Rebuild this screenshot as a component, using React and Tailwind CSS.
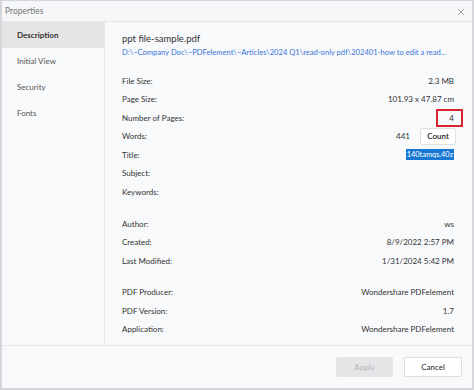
import React from 'react';

const rowsA = [
  ['File Size:', '2.3 MB'],
  ['Page Size:', '101.93 x 47.87 cm'],
  ['Number of Pages:', 'pages'],
  ['Words:', 'words'],
  ['Title:', 'title'],
  ['Subject:', ''],
  ['Keywords:', ''],
];

const rowsB = [
  ['Author:', 'ws'],
  ['Created:', '8/9/2022 2:57 PM'],
  ['Last Modified:', '1/31/2024 5:42 PM'],
];

const rowsC = [
  ['PDF Producer:', 'Wondershare PDFelement'],
  ['PDF Version:', '1.7'],
  ['Application:', 'Wondershare PDFelement'],
];

const Value = ({ v }) => {
  if (v === 'pages') {
    return (
      <span className="relative">
        4
        <span className="absolute -left-[13px] -right-[9px] -top-[3px] -bottom-[3px] border-2 border-[#d9262e]"></span>
      </span>
    );
  }
  if (v === 'words') {
    return (
      <span className="flex items-center">
        <span className="mr-[10px]">441</span>
        <span className="h-[17px] w-[36px] mr-[-2px] flex items-center justify-center bg-white border border-[#e0e1e4] rounded-[2px] font-semibold text-[#222]">Count</span>
      </span>
    );
  }
  if (v === 'title') {
    return <span className="bg-[#1777d4] text-white text-[7.4px] px-px leading-[11px]">140tamqs.40z</span>;
  }
  return <span>{v}</span>;
};

const Row = ({ label, value }) => (
  <div className="h-[18.5px] flex items-center justify-between">
    <span>{label}</span>
    <Value v={value} />
  </div>
);

export default function App() {
  return (
    <div className="w-[474px] h-[390px] bg-[#d5d7dc] pt-px pl-[2px] pr-[2px] pb-[2px] font-['Lato','Open_Sans',sans-serif]">
      <div className="h-full bg-[#f8f9fb] flex flex-col text-[8px] text-[#333]">
        <div className="h-[21px] shrink-0 flex items-center justify-between border-b border-[#e6e7ea] bg-[#f6f7f9]">
          <span className="pl-[3px] text-[8.5px] text-[#777]">Properties</span>
          <svg width="8" height="8" viewBox="0 0 8 8" className="mr-[7px] mt-[2px]">
            <path d="M1 1L7 7M7 1L1 7" stroke="#999" strokeWidth="0.9" />
          </svg>
        </div>
        <div className="flex flex-1 min-h-0">
          <div className="w-[103px] shrink-0 border-r border-[#e6e7ea] text-[8px] text-[#555]">
            <div className="h-[26px] bg-[#e5e5e6] flex items-center pl-[15px] font-bold text-[#333]">Description</div>
            <div className="h-[26px] flex items-center pl-[15px]">Initial View</div>
            <div className="h-[26px] flex items-center pl-[15px]">Security</div>
            <div className="h-[26px] flex items-center pl-[15px]">Fonts</div>
          </div>
          <div className="flex-1 min-w-0 overflow-hidden pl-[17px] pr-[18px] pt-[10px]">
            <div className="text-[9.5px] leading-[14px] text-[#333]">ppt file-sample.pdf</div>
            <div className="text-[7.6px] leading-[12px] text-[#3b74d9] whitespace-nowrap">D:\~Company Doc\~PDFelement\~Articles\2024 Q1\read-only pdf\202401-how to edit a read...</div>
            <div className="mt-[13.5px]">
              {rowsA.map(([l, v]) => <Row key={l} label={l} value={v} />)}
            </div>
            <div className="mt-[13.5px]">
              {rowsB.map(([l, v]) => <Row key={l} label={l} value={v} />)}
            </div>
            <div className="mt-[13px]">
              {rowsC.map(([l, v]) => <Row key={l} label={l} value={v} />)}
            </div>
          </div>
        </div>
        <div className="h-[43px] shrink-0 border-t border-[#e6e7ea] flex items-center justify-end gap-[11px] pr-[10px]">
          <div className="w-[57px] h-[20px] flex items-center justify-center bg-[#e4e5e7] text-[#b5b6b8] rounded-[2px]">Apply</div>
          <div className="w-[58px] h-[20px] flex items-center justify-center bg-white border border-[#dcdde0] text-[#222] rounded-[2px]">Cancel</div>
        </div>
      </div>
    </div>
  );
}
